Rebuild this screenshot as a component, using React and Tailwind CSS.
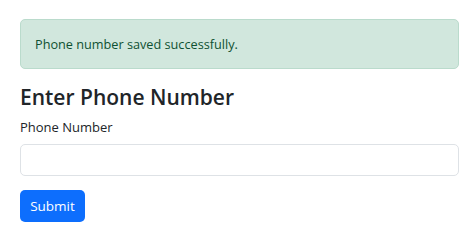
export default function App() {
  return (
    <div className="min-h-screen bg-white pl-5 pr-[15px] pt-[19px] font-['Open_Sans',sans-serif]">
      {/* Success alert */}
      <div className="rounded-[5px] border border-[#badbcc] bg-[#d1e7dd] px-[14px] py-[14px] text-[12.7px] leading-[20px] text-[#0f5132]">
        Phone number saved successfully.
      </div>

      <h3 className="mt-[16px] mb-[7px] text-[21px] font-semibold leading-[25px] text-[#212529]">
        Enter Phone Number
      </h3>

      <form onSubmit={(e) => e.preventDefault()}>
        <label htmlFor="phone" className="mb-[7px] block text-[13px] leading-[20px] text-[#212529]">
          Phone Number
        </label>
        <input
          id="phone"
          type="tel"
          className="mb-[14px] block h-[32px] w-full rounded-[5px] border border-[#dee2e6] bg-white px-[10px] text-[13px] text-[#212529] outline-none"
        />
        <button
          type="submit"
          className="h-[32px] w-[65px] rounded-[5px] bg-[#0d6efd] text-[13.5px] text-white"
        >
          Submit
        </button>
      </form>
    </div>
  )
}
